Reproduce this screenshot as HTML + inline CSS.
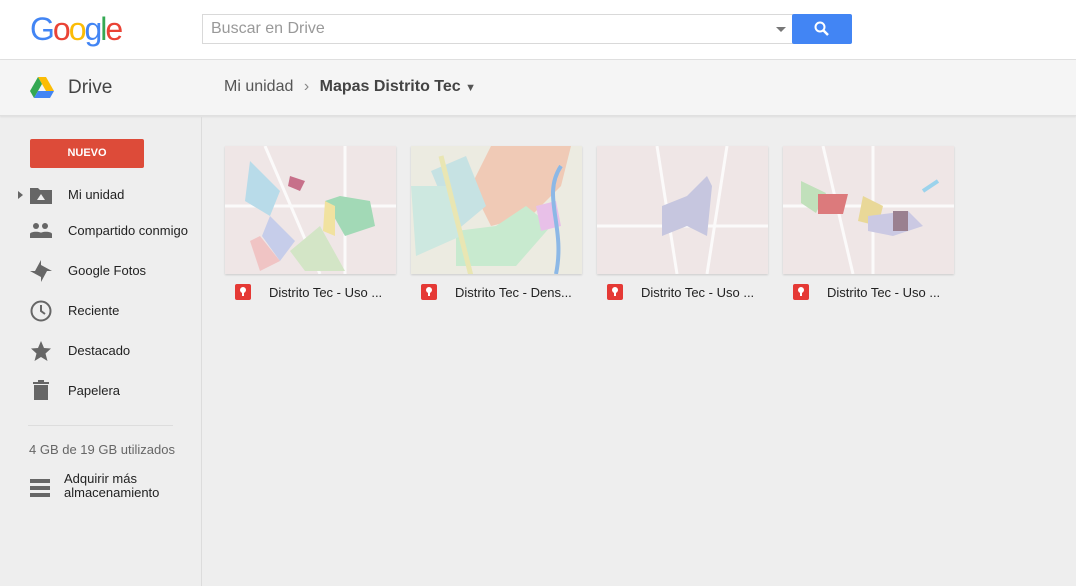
<!DOCTYPE html>
<html><head><meta charset="utf-8"><style>
*{margin:0;padding:0;box-sizing:border-box}
body{width:1076px;height:586px;overflow:hidden;background:#eeeeee;font-family:"Liberation Sans",Arial,sans-serif;position:relative}
.top{position:absolute;left:0;top:0;width:1076px;height:60px;background:#fff;border-bottom:1px solid #e0e0e0}
.logo{position:absolute;left:30px;top:11px;font-size:32px;letter-spacing:-2px;font-family:"Liberation Sans",sans-serif}
.search{position:absolute;left:202px;top:14px;width:591px;height:30px;border:1px solid #d9d9d9;border-right:none;background:#fff;font-size:16px;color:#999;padding:5px 8px}
.search:after{content:"";position:absolute;right:7px;top:12px;border:5px solid transparent;border-top-color:#777}
.sbtn{position:absolute;left:792px;top:14px;width:60px;height:30px;background:#4285f4;border-radius:2px}
.bar{position:absolute;left:0;top:60px;width:1076px;height:56px;background:#f5f5f5;border-bottom:1px solid #e0e0e0;box-shadow:0 1px 2px rgba(0,0,0,.08)}
.side{position:absolute;left:0;top:117px;width:202px;height:469px;border-right:1px solid #dcdcdc}
.nuevo{position:absolute;left:30px;top:139px;width:114px;height:29px;background:#dd4b39;border-radius:2px;color:#fff;font-size:11px;font-weight:bold;text-align:center;line-height:29px}
.item{position:absolute;left:68px;font-size:13px;color:#222}
.ic{position:absolute;left:30px}
.card{position:absolute;top:146px;width:171px;height:128px;background:#efe6e6;box-shadow:0 1px 2px rgba(0,0,0,.15);overflow:hidden}
.lbl{position:absolute;top:285px;font-size:13px;color:#222}
.pin{position:absolute;top:284px;width:16px;height:16px;background:#e53935;border-radius:2px}
.pin:after{content:"";position:absolute;left:5px;top:3px;width:6px;height:6px;background:#fff;border-radius:50%}
.pin:before{content:"";position:absolute;left:7px;top:7px;width:2px;height:5px;background:#fff}
</style></head><body>
<div class="top">
<div class="logo"><span style="color:#4285f4">G</span><span style="color:#ea4335">o</span><span style="color:#fbbc05">o</span><span style="color:#4285f4">g</span><span style="color:#34a853">l</span><span style="color:#ea4335">e</span></div>
<div class="search">Buscar en Drive</div>
<div class="sbtn"><svg width="60" height="30"><circle cx="28" cy="13" r="4.5" fill="none" stroke="#fff" stroke-width="2"/><path d="M31 16l5 5" stroke="#fff" stroke-width="2.5"/></svg></div>
</div>
<div class="bar">
<svg style="position:absolute;left:30px;top:17px" width="24" height="21"><path d="M8 0h8l8 14h-8z" fill="#fbbc05"/><path d="M8 0l-8 14 4 7 8-14z" fill="#34a853"/><path d="M4 21h16l4-7H8z" fill="#4285f4"/></svg>
<div style="position:absolute;left:68px;top:17px;font-size:19px;color:#444">Drive</div>
<div style="position:absolute;left:224px;top:18px;font-size:16px;color:#555">Mi unidad <span style="color:#888;margin:0 6px">›</span> <b style="color:#444">Mapas Distrito Tec</b> <span style="font-size:11px;color:#555">▼</span></div>
</div>
<div class="side"></div>
<div class="nuevo">NUEVO</div>
<div style="position:absolute;left:18px;top:191px;border:4px solid transparent;border-left:5px solid #666"></div>
<svg class="ic" style="top:186px" width="22" height="18"><path d="M0 2h8l2 2h12v14H0z" fill="#666"/><path d="M11 8l4 6h-8z" fill="#eee"/></svg>
<div class="item" style="top:187px">Mi unidad</div>
<svg class="ic" style="top:222px" width="22" height="16"><circle cx="6" cy="4" r="3" fill="#666"/><circle cx="15" cy="4" r="3" fill="#666"/><path d="M0 16v-4c0-3 12-3 12 0v4zM10 16v-4c0-3 12-3 12 0v4z" fill="#666"/></svg>
<div class="item" style="top:223px">Compartido conmigo</div>
<svg class="ic" style="top:260px" width="22" height="22"><path d="M11 0v11H5zM22 11H11V5zM11 22V11h6zM0 11h11v6z" fill="#666"/></svg>
<div class="item" style="top:263px">Google Fotos</div>
<svg class="ic" style="top:300px" width="22" height="22"><circle cx="11" cy="11" r="9.5" fill="none" stroke="#666" stroke-width="2"/><path d="M11 5v6l4 3" fill="none" stroke="#666" stroke-width="2"/></svg>
<div class="item" style="top:303px">Reciente</div>
<svg class="ic" style="top:340px" width="22" height="22"><path d="M11 1l3 7 7 .5-5.5 5 2 7.5L11 17l-6.5 4 2-7.5L1 8.5 8 8z" fill="#666"/></svg>
<div class="item" style="top:343px">Destacado</div>
<svg class="ic" style="left:33px;top:380px" width="16" height="20"><path d="M0 2h16v2H0zM5 0h6v2H5zM1 5h14v15H1z" fill="#666"/></svg>
<div class="item" style="top:383px">Papelera</div>
<div style="position:absolute;left:28px;top:425px;width:145px;border-top:1px solid #ddd"></div>
<div style="position:absolute;left:29px;top:442px;font-size:13px;color:#666">4 GB de 19 GB utilizados</div>
<svg class="ic" style="top:479px" width="20" height="18"><rect y="0" width="20" height="4" fill="#666"/><rect y="7" width="20" height="4" fill="#666"/><rect y="14" width="20" height="4" fill="#666"/></svg>
<div class="item" style="left:64px;top:472px;line-height:14px">Adquirir más<br>almacenamiento</div>

<div class="card" style="left:225px"><svg width="171" height="128"><path d="M40 0l55 128M0 60h171M120 0v128" stroke="#fff" stroke-width="3" opacity=".8"/><path d="M25 15l30 30-10 25-25-15z" fill="#b8dbe9"/><path d="M45 70l25 25-15 20-18-25z" fill="#c6cdea"/><path d="M35 90l20 25-20 10-10-30z" fill="#f0c4c4"/><path d="M65 105l30-25 25 45-40 0z" fill="#d3e5c6"/><path d="M100 55l15-5 30 5 5 25-30 10z" fill="#a2d9b6"/><path d="M65 30l15 5-5 10-12-5z" fill="#c7708a"/><path d="M100 55l10 5 0 30-12-5z" fill="#f1e2a0"/></svg></div>
<div class="card" style="left:411px;background:#ecebe1"><svg width="171" height="128"><path d="M80 0h80l-10 40-30 30-40 10-20-40z" fill="#f0cab6"/><path d="M20 25l35-15 20 50-30 25z" fill="#c6e2e3"/><path d="M45 85l40-5 30-20 25 20-35 40-60 0z" fill="#c8eacf"/><path d="M0 40l40 0 10 50-45 20z" fill="#cde8e0"/><path d="M125 60l20-5 5 25-20 5z" fill="#e8c0e8"/><path d="M30 10l30 120" stroke="#e9e6b3" stroke-width="5"/><path d="M150 20c-20 30 5 60-5 108" stroke="#8cb8e6" stroke-width="4" fill="none"/></svg></div>
<div class="card" style="left:597px"><svg width="171" height="128"><path d="M60 0l20 128M0 80h171M130 0l-20 128" stroke="#fff" stroke-width="3" opacity=".8"/><path d="M65 60l25-10 20-20 5 10-5 50-20-10-25 10z" fill="#c6c6df"/></svg></div>
<div class="card" style="left:783px"><svg width="171" height="128"><path d="M0 60h171M90 0v128M40 0l30 128" stroke="#fff" stroke-width="3" opacity=".8"/><path d="M18 35l25 12-10 20-15-10z" fill="#c1e0bb"/><path d="M35 48l30 0-5 20-25 0z" fill="#dc7a7c"/><path d="M80 50l20 10-5 20-20-5z" fill="#e9d898"/><path d="M85 70l40-5 15 15-30 10-25-5z" fill="#cbc9e3"/><path d="M110 65l15 0 0 20-15 0z" fill="#9a8090"/><path d="M140 45l15-10" stroke="#9bd3ec" stroke-width="4"/></svg></div>

<div class="pin" style="left:235px"></div><div class="lbl" style="left:269px">Distrito Tec - Uso ...</div>
<div class="pin" style="left:421px"></div><div class="lbl" style="left:455px">Distrito Tec - Dens...</div>
<div class="pin" style="left:607px"></div><div class="lbl" style="left:641px">Distrito Tec - Uso ...</div>
<div class="pin" style="left:793px"></div><div class="lbl" style="left:827px">Distrito Tec - Uso ...</div>
</body></html>
